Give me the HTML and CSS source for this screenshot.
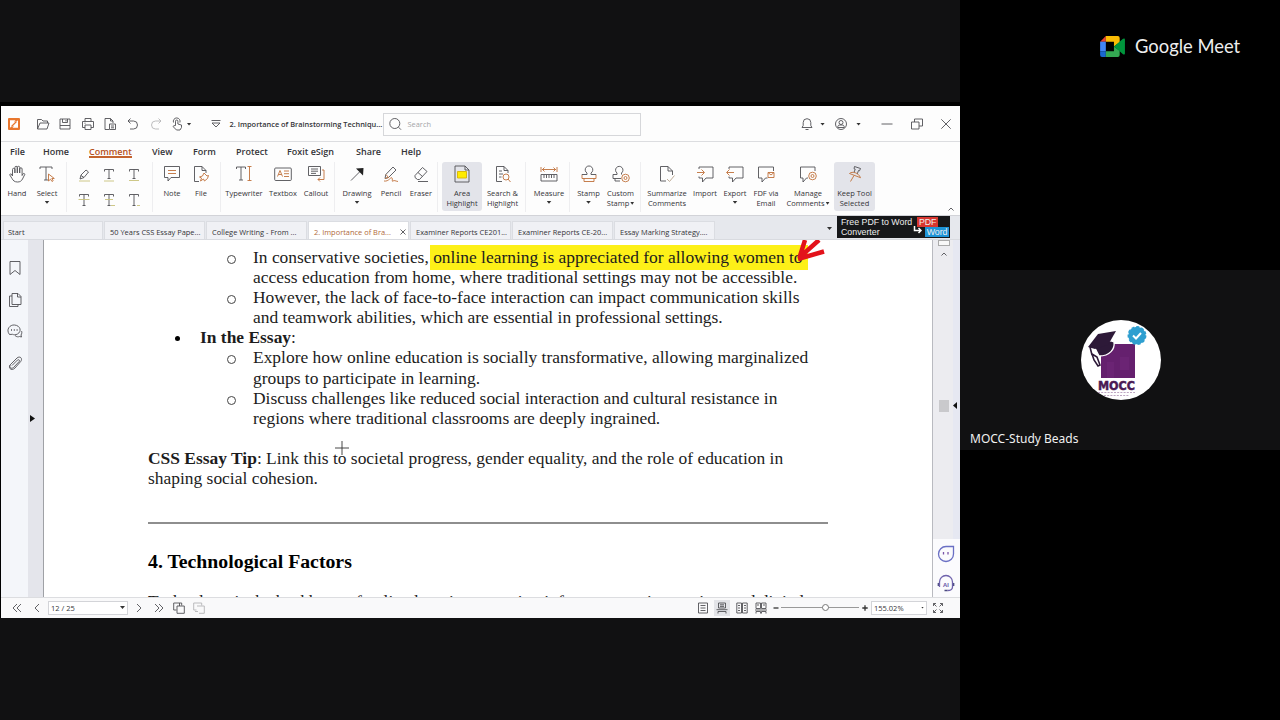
FILE: index.html
```html
<!DOCTYPE html>
<html lang="en">
<head>
    <meta charset="UTF-8">
    <meta name="viewport" content="width=device-width, initial-scale=1.0">
    <title>Google Meet</title>
    <link rel="stylesheet" href="styles.css">
</head>
<body>
    <div class="meet">
        <main class="presentation">
            <div class="window">
                <header class="titlebar">
                    <svg class="app-logo" viewBox="0 0 12 12"><rect width="12" height="12" rx="1" fill="#e8772e"/><path d="M2 2.200h5.500L6 4l4-1.500v7.300H4.500L6 8l-4 1.500z" fill="#fff"/><path d="M3.500 8.500l5-5" stroke="#e8772e" stroke-width="1.200"/></svg>
                    <div class="quick-icons">
                        <svg class="icon" viewBox="0 0 14 14"><path d="M1.500 12V2.500h4L7 4h4.500v2M1.500 12L4 6h9l-2 6z"/></svg>
                        <svg class="icon" viewBox="0 0 14 14"><path d="M2 2h10v10H2zM4.500 2v3.500h5V2M8 3v1.500M2 8.500h10"/></svg>
                        <svg class="icon" viewBox="0 0 14 14"><path d="M4 4V1.500h6V4M4 10.500H1.500V4.500h11v6H10M4 8h6v4.500H4zM3.500 6.200h1"/></svg>
                        <svg class="icon" viewBox="0 0 14 14"><path d="M6 12.500H2v-11h5.500L10 4v2M7.500 1.500V4H10M6.500 7h6v5.500h-6zM8 9h3M8 10.800h3"/></svg>
                        <svg class="icon" viewBox="0 0 14 14"><path d="M4.500 1.500L2 4l2.500 2.500M2 4h5.500a4 4 0 010 8H4"/></svg>
                        <svg class="icon faded" viewBox="0 0 14 14"><path d="M9.500 1.500L12 4 9.500 6.500M12 4H6.500a4 4 0 000 8H10"/></svg>
                    </div>
                    <svg class="icon touch" viewBox="0 0 14 14"><path d="M5.500 8.500V4.200a1.200 1.200 0 012.400 0V7l3.600 1v2.500L10 13H6.500L3 9.500l1-.8zM3.500 5.500a3.400 3.400 0 116.400 0"/></svg>
                    <span class="caret"></span>
                    <svg class="icon customize" viewBox="0 0 14 14"><path d="M2.500 3.500h9M3 6h8L7 10z"/></svg>
                    <span class="doc-title">2. Importance of Brainstorming Techniqu...</span>
                    <div class="search">
                        <svg class="icon" viewBox="0 0 14 14"><circle cx="6.800" cy="6.500" r="5"/><path d="M10.500 10.200l2.500 2.500"/></svg>
                        <span>Search</span>
                    </div>
                    <div class="window-buttons">
                        <svg class="icon" viewBox="0 0 14 14"><path d="M2 10.500h10L10.800 8.500V5.500a3.800 3.800 0 00-7.600 0v3zM5.500 12.500h3"/></svg>
                        <span class="caret"></span>
                        <svg class="icon" viewBox="0 0 14 14"><circle cx="7" cy="7" r="5.500"/><circle cx="7" cy="5.500" r="2"/><path d="M3.800 10.500V9.500a2 2 0 012-1.500h2.400a2 2 0 012 1.500v1z"/></svg>
                        <span class="caret"></span>
                        <svg class="icon" viewBox="0 0 14 14"><path d="M1.500 7h11"/></svg>
                        <svg class="icon" viewBox="0 0 14 14"><path d="M1.500 5h7.500v7H1.500zM4.500 5V2h8v7H9"/></svg>
                        <svg class="icon" viewBox="0 0 14 14"><path d="M2.300 2.300l9.400 9.400M11.700 2.300l-9.400 9.400"/></svg>
                    </div>
                </header>

                <nav class="menu">
                    <span>File</span>
                    <span>Home</span>
                    <span class="active"><b>Comment</b></span>
                    <span>View</span>
                    <span>Form</span>
                    <span>Protect</span>
                    <span>Foxit eSign</span>
                    <span>Share</span>
                    <span>Help</span>
                </nav>

                <section class="ribbon">
                    <div class="group g-select">
                        <div class="tool">
                            <svg viewBox="0 0 18 18"><path d="M4.500 11V4.500a1.200 1.200 0 012.400 0V8 2.500a1.200 1.200 0 012.400 0V8 2.500a1.200 1.200 0 012.400 0V8 4a1.200 1.200 0 012.400 0V10.500l1-1.800a1 1 0 011.700.7L14.500 14c-1 2-2.500 3-5 3-3 0-4.500-1.500-5.500-3.500L1.800 10a1 1 0 011.500-1z"/></svg>
                            <span>Hand</span>
                        </div>
                        <div class="tool">
                            <svg viewBox="0 0 18 18"><path d="M2 4V2h12v2M8 2v13M6 15h4"/><path class="accent" d="M10.500 9v7l2-1.800 1.500 2.300 1.200-.8-1.400-2.200h2.500z"/></svg>
                            <span>Select</span>
                            <i class="caret"></i>
                        </div>
                    </div>
                    <div class="group g-markup">
                        <svg viewBox="0 0 14 14"><path d="M3 11l1-4 5-5 2.500 2-4.500 5.500zM4 7.500l3 2"/><path class="lime" d="M2 13h11"/></svg>
                        <svg viewBox="0 0 14 14"><path d="M2.500 3.500v-2h9v2M7 1.500v9M5.500 10.500h3"/><path class="lime" d="M2 13h10"/></svg>
                        <svg viewBox="0 0 14 14"><path d="M2.500 3.500v-2h9v2M7 1.500v9M5.500 10.500h3"/><path class="lime" d="M2 12.500h10"/></svg>
                        <svg viewBox="0 0 14 14"><path d="M2.500 3.500v-2h9v2M7 1.500v11M5.500 12.500h3"/><path class="lime" d="M1.500 6.500h11"/></svg>
                        <svg viewBox="0 0 14 14"><path d="M2.500 3.500v-2h9v2M7 1.500v11M5.500 12.500h3"/><path class="lime" d="M3 6.500h8M9 12.500h4"/></svg>
                        <svg viewBox="0 0 14 14"><path d="M2.500 3.500v-2h9v2M7 1.500v11M5.500 12.500h3"/><path class="lime" d="M10 12.500h3"/></svg>
                    </div>
                    <div class="group g-note">
                        <div class="tool">
                            <svg viewBox="0 0 18 18"><path d="M1.500 1.500h15v11H8L5 16v-3.500H1.500z"/><path class="accent" d="M5 5.500h8M5 8.500h8"/></svg>
                            <span>Note</span>
                        </div>
                        <div class="tool">
                            <svg viewBox="0 0 18 18"><path d="M7 16.500H2.500v-15H10l4 4V8M10 1.500v4h4"/><path class="accent" d="M12 8l3 3 1.500-.5-1 3-3 2.500-1-2-3 2 1-3-2-1 3-1z"/></svg>
                            <span>File</span>
                        </div>
                    </div>
                    <div class="group g-type">
                        <div class="tool">
                            <svg viewBox="0 0 18 18"><path d="M1.500 4V2h9v2M6 2v13M4 15h4"/><path class="accent" d="M12.500 1.500h4M14.500 1.500v14M12.500 15.500h4"/></svg>
                            <span>Typewriter</span>
                        </div>
                        <div class="tool">
                            <svg viewBox="0 0 18 18"><rect x=".7" y="3" width="16.600" height="12.500" rx="1"/><path class="accent" d="M3.500 11.500L6 5.500l2.500 6M4.500 9.500h3M10 6h5M10 8.700h5M10 11.500h5"/></svg>
                            <span>Textbox</span>
                        </div>
                        <div class="tool">
                            <svg viewBox="0 0 18 18"><path d="M1.500 1.500h12v9h-12zM4 4h7M4 6.200h7M4 8.400h5"/><path class="accent" d="M15 5h2v9.500h-6l2-2M11 14.500l2 2"/></svg>
                            <span>Callout</span>
                        </div>
                    </div>
                    <div class="group g-draw">
                        <div class="tool">
                            <svg viewBox="0 0 18 18"><path d="M3 15.500L12 6.500"/><path class="solid" d="M8 3.500L15.500 3 15 10.500z"/></svg>
                            <span>Drawing</span>
                            <i class="caret"></i>
                        </div>
                        <div class="tool">
                            <svg viewBox="0 0 18 18"><path d="M3 13.500l.8-4L11 2l3 3-7.500 7.500z"/><path class="accent" d="M3 13.500l3.500-1M4 9.500l2.500 3M2 16c5 1 7-5 8-3s-.500 4 1 3 2 0 5 .5"/></svg>
                            <span>Pencil</span>
                        </div>
                        <div class="tool">
                            <svg viewBox="0 0 18 18"><path d="M3 10.500l7.500-8L15 6.500l-7.500 8H5.500L3 12.500zM6 7.500l4.500 4M6 16.500h10"/></svg>
                            <span>Eraser</span>
                        </div>
                    </div>
                    <div class="group g-area">
                        <div class="tool selected">
                            <svg viewBox="0 0 18 18"><path d="M2 1h10l4 4v12H2zM12 1v4h4"/><path d="M4.500 6.500h9v6.500h-9z" fill="#ffeb00" stroke="#d8b400"/></svg>
                            <span>Area<br>Highlight</span>
                        </div>
                        <div class="tool">
                            <svg viewBox="0 0 18 18"><path d="M8 16.500H2.500v-15H10l4 4V8M10 1.500v4h4M5 6h3M5 9h4M5 12h2.500"/><circle class="accent" cx="12" cy="12" r="3"/><path class="accent" d="M14 14l2.500 3"/></svg>
                            <span>Search &amp;<br>Highlight</span>
                        </div>
                    </div>
                    <div class="group g-measure">
                        <div class="tool">
                            <svg viewBox="0 0 18 18"><path d="M1 9.500h16v6.500H1zM4 10v3M6.500 10v3M9 10v3M11.500 10v3M14 10v3"/><path class="accent" d="M1 2v5M17 2v5M2 4.500h14M4.500 2.500l-2 2 2 2M13.500 2.500l2 2-2 2"/></svg>
                            <span>Measure</span>
                            <i class="caret"></i>
                        </div>
                    </div>
                    <div class="group g-stamp">
                        <div class="tool">
                            <svg viewBox="0 0 18 18"><path d="M2 10V9.500h5V8a3.800 3.800 0 114 0v1.500h5v.5"/><path class="accent" d="M2 10v3.500h14V10M4 13.500v3h10v-3"/></svg>
                            <span>Stamp</span>
                            <i class="caret"></i>
                        </div>
                        <div class="tool">
                            <svg viewBox="0 0 18 18"><path d="M9 13.500H1V9.500h4V8a3.700 3.700 0 114.500 0v1.500M3 13.500V16h5"/><circle class="accent" cx="13.500" cy="13" r="3.800"/><circle class="accent" cx="13.500" cy="13" r="1.500"/></svg>
                            <span>Custom<br>Stamp <i class="caret"></i></span>
                        </div>
                    </div>
                    <div class="group g-manage">
                        <div class="tool">
                            <svg viewBox="0 0 18 18"><path d="M8 16H2.500V1.500H10l4.500 4.500v4M10 1.500V6h4.500"/><path class="tan" d="M9 14l2.500 2.500 5-6"/></svg>
                            <span>Summarize<br>Comments</span>
                        </div>
                        <div class="tool">
                            <svg viewBox="0 0 18 18"><path d="M3 4V2h14v11h-7l-3.500 4v-4H3v-1.500"/><path class="accent" d="M1 7.500h7M5.500 4.500l3 3-3 3"/></svg>
                            <span>Import</span>
                        </div>
                        <div class="tool">
                            <svg viewBox="0 0 18 18"><path d="M3 4V2h14v11h-7l-3.500 4v-4H3v-1.500"/><path class="accent" d="M1 7.500h7M3.500 4.500l-3 3 3 3"/></svg>
                            <span>Export</span>
                            <i class="caret"></i>
                        </div>
                        <div class="tool">
                            <svg viewBox="0 0 18 18"><path d="M16.500 6V2h-15v11H5v4l3.500-4h2"/><path class="accent" d="M11 7.500h6v5h-6zM11 7.500l3 2.500 3-2.500"/></svg>
                            <span>FDF via<br>Email</span>
                        </div>
                        <div class="tool">
                            <svg viewBox="0 0 18 18"><path d="M16 6V2H1.500v11H4v4l3.500-4H9"/><circle class="accent" cx="13.500" cy="11" r="3.800"/><circle class="accent" cx="13.500" cy="11" r="1.500"/></svg>
                            <span>Manage<br>Comments <i class="caret"></i></span>
                        </div>
                        <div class="tool selected">
                            <svg viewBox="0 0 18 18"><path d="M8.500 1.500l6 2-1 2.300-1-.3-1.300 3.500M8.500 1.500L8 3.700l1.200.4L8 7.500"/><path class="accent" d="M3.500 8.500c2.500-2.500 9-1 11 4.200zM8 10.500l-3.500 6"/></svg>
                            <span>Keep Tool<br>Selected</span>
                        </div>
                    </div>
                    <svg class="collapse" viewBox="0 0 8 6"><path d="M1.500 4.500L4 2l2.500 2.500"/></svg>
                </section>

                <div class="tabs">
                    <div class="tab">Start</div>
                    <div class="tab">50 Years CSS Essay Pape...</div>
                    <div class="tab">College Writing - From ...</div>
                    <div class="tab current">2. Importance of Bra...
                        <svg viewBox="0 0 8 8"><path d="M1.500 1.500l5 5M6.500 1.500l-5 5"/></svg>
                    </div>
                    <div class="tab">Examiner Reports CE201...</div>
                    <div class="tab">Examiner Reports CE-20...</div>
                    <div class="tab">Essay Marking Strategy....</div>
                    <i class="caret"></i>
                    <div class="promo">
                        <span>Free PDF to Word<br>Converter</span>
                        <div class="badges">
                            <b class="red">PDF</b>
                            <b class="blue">Word</b>
                            <svg viewBox="0 0 10 10"><path d="M1.500 1v4.500h6M5.500 3l2.500 2.500L5.500 8"/></svg>
                        </div>
                    </div>
                </div>

                <div class="workspace">
                    <aside class="side-icons">
                        <svg viewBox="0 0 16 16"><path d="M3 1.500h10v13L8 10.500l-5 4z"/></svg>
                        <svg viewBox="0 0 16 16"><path d="M5 1.500h6l3 3v8H5zM10.500 1.500V5H14M5 4H2.500v10.500H11V12.500"/></svg>
                        <svg viewBox="0 0 16 16"><path d="M2.500 11.500c-4-5 .5-10 5-9.500 6 .5 7.500 6.500 3 9-2 1.200-4 .8-5 .3zM8 12.500c1.500 1.500 3.500 1.500 4.500 1l2 .5-.5-2c1-1.500 1-3 .5-4"/><path d="M4 7h1M6.800 7h1M9.600 7h1" stroke-width="1.400"/></svg>
                        <svg viewBox="0 0 16 16"><path d="M4.500 10l5.500-5.500c1.500-1 2.500.5 1.700 1.500L6 12c-2.500 2-5-.5-3-3l6.500-6.500c3-2.500 6 .5 3.700 3.500L7.500 12.500c-3.500 3.500-7.500 0-4.500-3.500" transform="translate(.5 .5)"/></svg>
                    </aside>
                    <div class="side-strip"><i class="expand"></i></div>
                    <article class="page">
                        <ul class="sub">
                            <li>In conservative societies, <mark>online learning is appreciated for allowing women to</mark><br>access education from home, where traditional settings may not be accessible.</li>
                            <li>However, the lack of face-to-face interaction can impact communication skills<br>and teamwork abilities, which are essential in professional settings.</li>
                        </ul>
                        <p class="point"><b>In the Essay</b>:</p>
                        <ul class="sub">
                            <li>Explore how online education is socially transformative, allowing marginalized<br>groups to participate in learning.</li>
                            <li>Discuss challenges like reduced social interaction and cultural resistance in<br>regions where traditional classrooms are deeply ingrained.</li>
                        </ul>
                        <p class="tip"><b>CSS Essay Tip</b>: Link this to societal progress, gender equality, and the role of education in<br>shaping social cohesion.</p>
                        <hr>
                        <h3>4. Technological Factors</h3>
                        <p>Technology is the backbone of online learning, ensuring infrastructure, innovation, and digital</p>
                        <svg class="red-arrow" viewBox="0 0 32 24"><path d="M24 0L5 17M10 0L4.500 17.500M3 19L29 11.500"/></svg>
                        <svg class="crosshair" viewBox="0 0 14 14"><path d="M7 0v14M0 7h14"/></svg>
                    </article>
                    <div class="scroll">
                        <div class="scrollbar">
                            <i class="split"></i>
                            <svg viewBox="0 0 8 6"><path d="M1.500 4.500L4 2l2.500 2.500"/></svg>
                            <i class="thumb"></i>
                        </div>
                        <div class="scroll-edge"><i class="collapse-right"></i></div>
                        <div class="assistants">
                            <svg viewBox="0 0 18 18"><path d="M9 1.500h7.500V9A7.500 7.500 0 119 1.500z" stroke="#6a6fc4"/><path d="M6.500 7v2.500M11 7v2.500" stroke="#7a55a8"/></svg>
                            <svg viewBox="0 0 18 18"><path d="M2.500 9V8a6.500 6.500 0 0113 0v1M2.500 8v5M15.500 8v5c0 2-2 3.500-5 3.500" stroke="#6f62ac"/><text x="9" y="12.500" text-anchor="middle">AI</text><path d="M1.300 9v3M16.700 9v3M7.500 16.500h3" stroke="#4b4a80"/></svg>
                        </div>
                    </div>
                </div>

                <footer class="statusbar">
                    <div class="pager">
                        <svg viewBox="0 0 12 12"><path d="M6 2L2 6l4 4M10 2L6 6l4 4"/></svg>
                        <svg viewBox="0 0 12 12"><path d="M8 2L4 6l4 4"/></svg>
                        <div class="field">12 / 25 <i class="caret"></i></div>
                        <svg viewBox="0 0 12 12"><path d="M4 2l4 4-4 4"/></svg>
                        <svg viewBox="0 0 12 12"><path d="M2 2l4 4-4 4M6 2l4 4-4 4"/></svg>
                        <svg viewBox="0 0 12 12"><path d="M3.500 8H.7V1h8v2.500M4 4h7.300v7.300H4zM6.500 1v3"/></svg>
                        <svg class="faded" viewBox="0 0 12 12"><path d="M3.500 8H.7V1h8v2.500M4 4h7.300v7.300H6M2 9.500h3"/></svg>
                    </div>
                    <div class="zoom">
                        <svg viewBox="0 0 12 12"><path d="M1.500 1h9v10h-9zM3.500 3.500h5M3.500 6h5M3.500 8.500h5"/></svg>
                        <svg class="on" viewBox="0 0 12 12"><path d="M2.500 1v5h7V1zM2 11.500V9.500h8v2M.5 7.700h11M4 2.800h4M4 4.400h4"/></svg>
                        <svg viewBox="0 0 12 12"><path d="M.8 1h4.700v10H.8zM6.500 1h4.700v10H6.500zM2 3.500h2M2 6h2M2 8.500h2M8 3.500h2M8 6h2M8 8.500h2"/></svg>
                        <svg viewBox="0 0 12 12"><path d="M1 1h4.500v5.500H1zM6.500 1H11v5.500H6.500zM0 8h12M1 11.500V9.500h4.500v2M6.500 11.500V9.500H11v2M2 3h2M8 3h2"/></svg>
                        <svg viewBox="0 0 12 12"><path class="thick" d="M3.500 6h5"/></svg>
                        <div class="slider"><i></i></div>
                        <svg viewBox="0 0 12 12"><path class="thick" d="M3.300 6h5.400M6 3.300v5.400"/></svg>
                        <div class="field">155.02% <i class="caret small"></i></div>
                        <svg viewBox="0 0 12 12"><path d="M1.500 4V1.500H4M1.500 1.500l3 3M8 1.500h2.500V4M10.500 1.500l-3 3M1.500 8v2.500H4M1.500 10.500l3-3M10.500 8v2.500H8M10.500 10.500l-3-3"/></svg>
                    </div>
                </footer>
            </div>
        </main>

        <aside class="rail">
            <div class="brand">
                <svg viewBox="0 0 27 22">
                    <path d="M6 0v6H0z" fill="#ea4335"/>
                    <path d="M6 0h12.500q2 0 2 2v4.500L14.500 11V6H6z" fill="#fbbc04"/>
                    <path d="M0 6h6v10H0z" fill="#4285f4"/>
                    <path d="M0 16h6v6H2q-2 0-2-2z" fill="#1967d2"/>
                    <path d="M6 16h8.500v-5l6 4.500V20q0 2-2 2H6z" fill="#34a853"/>
                    <path d="M14.500 11L24 3q2-1.200 2 .8v14.400q0 2-2 .8l-3.500-3z" fill="#00953c"/>
                </svg>
                <span>Google <em>Meet</em></span>
            </div>
            <div class="participant">
                <svg class="avatar" viewBox="0 0 80 80">
                    <circle cx="40" cy="40" r="40" fill="#fff"/>
                    <path d="M20 24h34v34H20z" fill="#65206e"/>
                    <path d="M39 37h9v13h-9zM26 42h7v16h-7z" fill="#7b2d84" opacity=".3"/>
                    <path d="M14 28c5-6 14-9 19-6 1 7-4 14-15 14z" fill="#2d1938" stroke="#fff" stroke-width="1.300"/>
                    <path d="M7 27l10-13 18-3-8 14-13 4z" fill="#2d1938"/>
                    <path d="M16 19L9 27l2 8M11 34l5 3 3 8-2 1-4-6z" fill="none" stroke="#2d1938" stroke-width="1.600"/>
                    <circle cx="56" cy="15.500" r="8.700" fill="#2f9fd0" stroke="#2f9fd0" stroke-width="1.500" stroke-dasharray="3 2"/>
                    <path d="M52 15.500l3 3 5-5.500" fill="none" stroke="#fff" stroke-width="2"/>
                    <text class="logo-name" x="35.500" y="69.500" text-anchor="middle" textLength="37" lengthAdjust="spacingAndGlyphs">MOCC</text>
                    <path d="M17 72.500h37M23 75.500h25" stroke="#b79bbb" stroke-width=".9" stroke-dasharray="2 1.200"/>
                </svg>
                <span class="name">MOCC-Study Beads</span>
            </div>
        </aside>
    </div>
</body>
</html>
```
FILE: styles.css
```css
:root {
    --ink: #343438;
    --accent: #c0703a;
    --panel: #f4f6fa;
}

* {
    margin: 0;
    padding: 0;
    box-sizing: border-box;
}

body {
    width: 1280px;
    height: 720px;
    overflow: hidden;
    background: #000;
    font-family: "Open Sans", "Noto Sans", sans-serif;
    color: var(--ink);
}

svg {
    display: block;
    fill: none;
    stroke: #505055;
    stroke-width: 0.9;
    flex: none;
}

.meet {
    display: grid;
    grid-template-columns: 960px 320px;
    height: 720px;
}

/* shared screen */
.presentation {
    background: #111112;
    padding-top: 102px;
}

.window {
    display: grid;
    grid-template-columns: 959px;
    grid-template-rows: 35px 21px 53px 25px 357px 21px;
    height: 516px;
    border-top: 4px solid #000;
    border-left: 1px solid #000;
    background: #fdfdfd;
    overflow: hidden;
}

.caret {
    display: inline-block;
    flex: none;
    width: 5px;
    height: 3px;
    background: #333;
    clip-path: polygon(0 0, 100% 0, 50% 100%);
}

.caret.small {
    width: 3px;
    height: 2px;
}

.faded {
    opacity: 0.4;
}

/* title bar */
.titlebar {
    display: flex;
    align-items: center;
    height: 36px;
    padding: 1px 0 0 7px;
    border-bottom: 1px solid #dcdde0;
}

.icon {
    width: 14px;
    height: 14px;
}

.app-logo {
    width: 12px;
    height: 12px;
    stroke: none;
}

.quick-icons {
    display: grid;
    grid-template-columns: repeat(6, 22.6px);
    justify-items: center;
    margin-left: 11.4px;
}

.touch {
    margin: 0 3px 0 2.6px;
}

.customize {
    margin: 0 7px 0 17px;
}

.doc-title {
    flex: none;
    width: 153px;
    font-size: 7.4px;
    font-weight: 600;
    white-space: nowrap;
}

.search {
    display: flex;
    flex: none;
    align-items: center;
    gap: 6px;
    width: 258px;
    height: 23px;
    padding-left: 4px;
    border: 1px solid #d6d7da;
    font-size: 7.4px;
    color: #a5a5a8;
}

.window-buttons {
    display: grid;
    grid-template-columns: 20px 12px 24px 12px 44px 16px 42px;
    justify-items: center;
    align-items: center;
    margin-left: 156px;
}

/* menu */
.menu {
    display: grid;
    grid-template-columns: 33px 46px 63px 41px 43px 51px 69px 45px 40px;
    align-items: center;
    padding-left: 9px;
    font-size: 9px;
    font-weight: 600;
    line-height: 13px;
    white-space: nowrap;
}

.menu .active {
    color: #b5501a;
}

.menu b {
    display: inline-block;
    height: 13px;
    border-bottom: 2px solid #c4642f;
    font-weight: 600;
}

/* ribbon */
.ribbon {
    display: grid;
    grid-template-columns: 66px 86px 68px 114px 103px 88px 44px 71px 240px;
    position: relative;
    height: 54px;
    border-bottom: 1px solid #d2d3d8;
}

.group {
    display: grid;
    align-items: start;
    height: 50px;
    border-right: 1px solid #eeeef0;
}

.g-select { padding-left: 1px; grid-template-columns: 30px 30px; }
.g-note { padding-left: 4px; grid-template-columns: 30px 28px; }
.g-type { padding-left: 2px; grid-template-columns: 42px 36px 30px; }
.g-draw { padding-left: 4px; grid-template-columns: 36px 32px 28px; }
.g-area { padding-left: 4px; grid-template-columns: 40px 41px; }
.g-measure { padding-left: 5px; grid-template-columns: 36px; }
.g-stamp { padding-left: 5px; grid-template-columns: 27px 37px; }
.g-manage { padding-left: 5px; grid-template-columns: 42px 34px 26px 36px 48px 41px; border-right: none; }

.g-manage .selected {
    margin: 0 -2px 0 2px;
}

.g-markup {
    grid-template-columns: repeat(3, 25.3px);
    grid-template-rows: 25px 25px;
    justify-items: center;
    align-items: center;
    padding-left: 4px;
}

.g-markup svg {
    width: 14px;
    height: 14px;
}

.tool {
    display: flex;
    flex-direction: column;
    align-items: center;
    height: 49px;
    padding-top: 3px;
    border-radius: 3px;
    font-size: 7.5px;
    font-weight: 500;
    line-height: 10.3px;
    text-align: center;
    white-space: nowrap;
}

.tool svg {
    width: 18px;
    height: 18px;
    margin-bottom: 4.5px;
}

.tool > .caret {
    margin-top: 3px;
}

.tool span .caret {
    width: 4px;
    vertical-align: 1px;
    margin-left: -1px;
}

.tool.selected {
    background: #e3e4ea;
}

.accent {
    stroke: var(--accent);
}

.tan {
    stroke: #b9a58d;
}

.lime {
    stroke: #c8c27a;
}

.solid {
    fill: #222;
    stroke: none;
}

.collapse {
    position: absolute;
    right: 5px;
    bottom: 3px;
    width: 8px;
    height: 6px;
}

/* document tabs */
.tabs {
    display: grid;
    grid-template-columns: 101px repeat(6, 102px) 116px 5px 113px;
    align-items: end;
    padding-left: 2px;
    height: 25px;
    background: #e6e8ed;
    border-bottom: 1px solid #d9dbe0;
    font-size: 7.45px;
    white-space: nowrap;
}

.tab {
    display: flex;
    align-items: center;
    justify-content: space-between;
    height: 18px;
    margin-right: 1px;
    padding: 2px 2px 0 5px;
    border: 1px solid #dbdde2;
    border-bottom: none;
    background: #f0f1f5;
}

.tab:first-child {
    padding-left: 4px;
}

.tab.current {
    padding-right: 1px;
    background: #fff;
    color: #b06a3c;
}

.tab svg {
    width: 8px;
    height: 8px;
}

.tabs > .caret {
    justify-self: end;
    margin-bottom: 9px;
}

.promo {
    display: flex;
    justify-content: space-between;
    grid-column: 10;
    height: 22px;
    margin-bottom: 1px;
    padding: 1px 1px 0 4px;
    background: #17181a;
    color: #eee;
    font-family: "Liberation Sans", sans-serif;
    font-size: 8.8px;
    line-height: 10px;
}

.badges {
    display: flex;
    flex-direction: column;
    align-items: flex-end;
    position: relative;
    width: 36px;
    font-size: 8.8px;
}

.badges b {
    padding: 0 1.5px;
    font-weight: 400;
    line-height: 10px;
}

.red {
    margin-right: 11px;
    background: #d8362f;
}

.blue {
    background: #1e94d8;
}

.badges svg {
    position: absolute;
    left: 0;
    top: 8px;
    width: 10px;
    height: 10px;
    stroke: #fff;
    stroke-width: 1.5;
}

/* workspace */
.workspace {
    display: grid;
    grid-template-columns: 27px 15px 889px 28px;
    overflow: hidden;
}

.side-icons {
    display: flex;
    flex-direction: column;
    align-items: center;
    gap: 15.5px;
    padding-top: 20px;
    background: var(--panel);
}

.side-icons svg {
    width: 16px;
    height: 16px;
}

.side-strip {
    display: flex;
    align-items: center;
    justify-content: center;
    background: #e4e5eb;
}

.expand {
    width: 5px;
    height: 7px;
    margin-left: -6px;
    background: #111;
    clip-path: polygon(0 0, 100% 50%, 0 100%);
}

.page {
    position: relative;
    padding: 7px 0 0 104px;
    border-left: 1px solid #9fa1a6;
    background: #fff;
    color: #1c1c1c;
    font-family: "Liberation Serif", serif;
    font-size: 17.45px;
    line-height: 20.1px;
    white-space: nowrap;
    overflow: hidden;
}

.sub {
    padding-left: 105px;
    list-style: none;
}

.sub li::before {
    content: "";
    float: left;
    width: 7px;
    height: 7px;
    margin: 8px 0 0 -26px;
    border: 1px solid #444;
    border-radius: 50%;
}

mark {
    padding: 2px 5px 3px 3px;
    margin-left: -3px;
    background: #fdf018;
    color: inherit;
}

.point {
    padding-left: 52px;
}

.point::before {
    content: "";
    float: left;
    width: 5px;
    height: 5px;
    margin: 9px 0 0 -25px;
    border-radius: 50%;
    background: #000;
}

.tip {
    margin-top: 20px;
}

hr {
    width: 680px;
    height: 2px;
    margin: 34px 0 25.5px;
    border: none;
    background: #8e8e8e;
}

h3 {
    margin-bottom: 19.5px;
    font-size: 19.8px;
    line-height: 22px;
    color: #000;
}

.red-arrow {
    position: absolute;
    left: 751px;
    top: 0;
    width: 32px;
    height: 24px;
    stroke: #e3121b;
    stroke-width: 4.5;
}

.crosshair {
    position: absolute;
    left: 291px;
    top: 201px;
    width: 14px;
    height: 14px;
    stroke: #333;
}

.scroll {
    display: grid;
    grid-template-columns: 20px 8px;
    grid-template-rows: 299px 58px;
    border-left: 1px solid #b9bac0;
}

.scrollbar {
    display: flex;
    flex-direction: column;
    align-items: center;
    padding-left: 1px;
    background: #ececf0;
}

.split {
    width: 12px;
    height: 6px;
    border: 1px solid #aaa;
    background: #f8f8f8;
}

.scrollbar svg {
    width: 8px;
    height: 6px;
    margin-top: 5px;
}

.thumb {
    width: 10px;
    height: 12px;
    margin-top: 143px;
    background: #c9c9cc;
}

.scroll-edge {
    background: #e6e8f2;
}

.collapse-right {
    display: block;
    width: 4px;
    height: 7px;
    margin-top: 162px;
    background: #111;
    clip-path: polygon(100% 0, 100% 100%, 0 50%);
}

.assistants {
    display: grid;
    grid-column: 1 / 3;
    grid-template-rows: 29px 29px;
    justify-items: center;
    align-items: center;
    padding-right: 2px;
    background: #fbfbfd;
}

.assistants svg {
    width: 18px;
    height: 18px;
    stroke-width: 1.3;
}

.assistants text {
    fill: #6f62ac;
    stroke: none;
    font-size: 6px;
    font-weight: 700;
}

/* status bar */
.statusbar {
    display: flex;
    align-items: center;
    justify-content: space-between;
    padding-bottom: 1px;
    border-top: 1px solid #dcdde0;
    background: #f9f9fa;
    font-size: 7.5px;
}

.statusbar svg {
    width: 12px;
    height: 12px;
}

.pager {
    display: grid;
    grid-template-columns: 20px 20px 82px 20px 20px 20px 20px;
    justify-items: center;
    align-items: center;
    padding-left: 6px;
}

.field {
    display: flex;
    align-items: center;
    justify-content: space-between;
    width: 80px;
    height: 14px;
    padding: 0 2px;
    border: 1px solid #d3d4d8;
    background: #fff;
}

.zoom {
    display: grid;
    grid-template-columns: 19.5px 19.5px 19.5px 19.5px 9px 79px 11px 58px 20px;
    justify-items: center;
    align-items: center;
    padding-right: 12px;
}

.zoom .field {
    width: 56px;
}

.zoom .on {
    background: #e3e4e8;
    outline: 2px solid #e3e4e8;
}

.thick {
    stroke: #333;
    stroke-width: 1.3;
}

.slider {
    display: flex;
    align-items: center;
    width: 78px;
    height: 1px;
    padding-left: 41px;
    background: #999;
}

.slider i {
    width: 7px;
    height: 7px;
    border: 1px solid #777;
    border-radius: 50%;
    background: #fff;
}

/* right rail */
.rail {
    display: grid;
    grid-template-rows: 270px 180px;
    background: #000;
}

.brand {
    display: flex;
    align-items: center;
    gap: 9px;
    height: 22px;
    margin: 35px 0 0 140px;
    color: #eee;
    font-family: Lato, sans-serif;
    font-size: 18.4px;
    white-space: nowrap;
}

.brand svg {
    width: 26px;
    height: 21px;
    stroke: none;
}

.brand em {
    font-style: normal;
    font-weight: 400;
}

.participant {
    display: flex;
    flex-direction: column;
    justify-content: space-between;
    padding: 50px 10px 3px;
    background: #111112;
}

.avatar {
    width: 80px;
    height: 80px;
    margin-left: 111px;
    stroke: none;
}

.logo-name {
    fill: #4a1a55;
    stroke: #4a1a55;
    stroke-width: 0.5;
    font-family: "DejaVu Sans", sans-serif;
    font-size: 12px;
    font-weight: 700;
}

.name {
    font-family: "Noto Sans", sans-serif;
    font-size: 12px;
    color: #f0f0f0;
}
```
